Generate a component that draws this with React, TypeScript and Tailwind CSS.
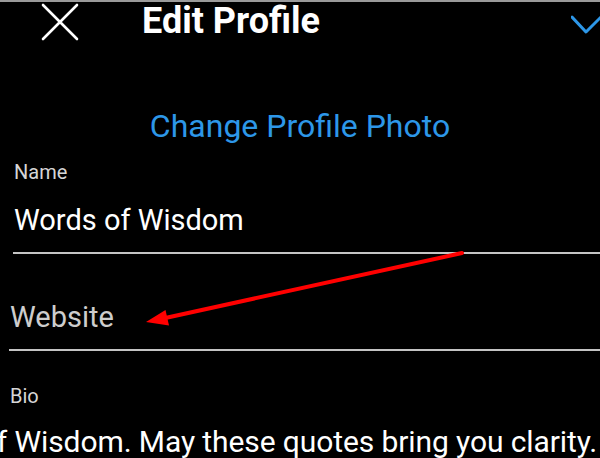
export default function App() {
  const roboto = { fontFamily: "Roboto, 'Liberation Sans', sans-serif" };

  return (
    <div className="relative h-[458px] w-[600px] overflow-hidden bg-black" style={roboto}>
      <div className="h-[2px] bg-[#9a9a9a]" />

      {/* header */}
      <div className="flex h-[42px] items-start">
        <svg className="ml-[41px] mt-[1px]" width="38" height="38" viewBox="0 0 38 38">
          <path d="M2 2 L36 36 M36 2 L2 36" stroke="#ffffff" strokeWidth="2.6" strokeLinecap="round" fill="none" />
        </svg>
        <div className="ml-[63px] mt-[1px] text-[36px] leading-[36px] font-bold text-white">Edit Profile</div>
        <svg className="ml-auto mt-[13px]" width="29" height="22" viewBox="0 0 29 22">
          <path d="M1 2 L15 17 L31 1" stroke="#2d97e8" strokeWidth="3" strokeLinecap="round" strokeLinejoin="round" fill="none" />
        </svg>
      </div>

      <div className="mt-[66px] text-center text-[32px] leading-[32px] text-[#2d97e8]">Change Profile Photo</div>

      {/* name field */}
      <div className="mt-[20px] pl-[14px]">
        <div className="text-[20px] leading-[20px] text-[#d6d6d6]">Name</div>
        <div className="mt-[24px] text-[29px] leading-[29px] text-white">Words of Wisdom</div>
      </div>
      <div className="ml-[13px] mt-[17px] h-[2px] bg-[#c4c4c4]" />

      {/* website field */}
      <div className="mt-[49px] pl-[10px] text-[29px] leading-[29px] text-[#cdcdcd]">Website</div>
      <div className="ml-[9px] mt-[17px] h-[2px] bg-[#c4c4c4]" />

      {/* bio */}
      <div className="mt-[35px] pl-[10px] text-[20px] leading-[20px] text-[#d6d6d6]">Bio</div>
      <div className="mt-[21px] flex justify-end pr-[3px]">
        <div className="whitespace-nowrap text-[30px] leading-[30px] tracking-[-0.1px] text-white">
          Words of Wisdom. May these quotes bring you clarity.
        </div>
      </div>

      {/* annotation arrow */}
      <svg className="pointer-events-none absolute left-0 top-0" width="600" height="458" viewBox="0 0 600 458">
        <line x1="462" y1="253" x2="163" y2="318.5" stroke="#ff0000" strokeWidth="4" strokeLinecap="round" />
        <polygon points="146,322 165.5,310 169,325.5" fill="#ff0000" />
      </svg>
    </div>
  );
}
